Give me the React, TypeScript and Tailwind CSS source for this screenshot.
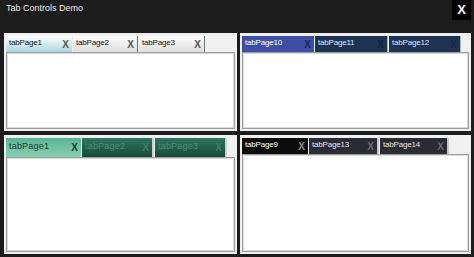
import React from "react";

type TabDef = {
  label: string;
  width: string;
  box: string;
  text: string;
  x: string;
};

type PanelProps = {
  tabs: TabDef[];
  stripHeight: string;
  font: string;
};

function TabPanel({ tabs, stripHeight, font }: PanelProps) {
  return (
    <div className="flex flex-col bg-[#f0f0f0] px-[2px] pb-[2px]">
      <div className={`flex items-end gap-[1px] pt-[3px] ${stripHeight}`}>
        {tabs.map((t) => (
          <div
            key={t.label}
            className={`flex h-full shrink-0 items-center justify-between pl-[3px] pr-[3px] ${t.width} ${t.box}`}
          >
            <span className={`-mt-[2px] ${font} ${t.text} leading-none`}>{t.label}</span>
            <span className={`mt-[1px] text-[10px] font-bold leading-none ${t.x}`}>X</span>
          </div>
        ))}
      </div>
      <div className="flex-1 border border-[#9c9c9c] bg-white shadow-[inset_0_0_0_1px_#dcdcdc]" />
    </div>
  );
}

const plainTab = "bg-gradient-to-b from-[#ffffff] to-[#dedede] border-r border-[#6e6e6e]";

const topLeft: TabDef[] = [
  { label: "tabPage1", width: "w-[66px]", box: "bg-gradient-to-b from-[#ffffff] to-[#a9d9e2]", text: "text-[#111]", x: "text-[#555]" },
  { label: "tabPage2", width: "w-[65px]", box: plainTab, text: "text-[#111]", x: "text-[#555]" },
  { label: "tabPage3", width: "w-[66px]", box: plainTab, text: "text-[#111]", x: "text-[#555]" },
];

const navyTab = "bg-[#1e3253] border-r border-[#aab0c0]";

const topRight: TabDef[] = [
  { label: "tabPage10", width: "w-[72px]", box: "bg-[#3d4fa3]", text: "text-white", x: "text-[#1d2650]" },
  { label: "tabPage11", width: "w-[73px]", box: navyTab, text: "text-[#dfe5f0]", x: "text-[#16243d]" },
  { label: "tabPage12", width: "w-[72px]", box: navyTab, text: "text-[#dfe5f0]", x: "text-[#16243d]" },
];

const tealTab = "bg-gradient-to-b from-[#2f7760] to-[#164a39] border-r-2 border-[#d0d0d0]";

const bottomLeft: TabDef[] = [
  { label: "tabPage1", width: "w-[75px]", box: "bg-gradient-to-b from-[#5cb393] to-[#86cfb5]", text: "text-[#163a2e]", x: "text-[#163a2e]" },
  { label: "tabPage2", width: "w-[72px]", box: tealTab, text: "text-[#4c8c74]", x: "text-[#3f7a64]" },
  { label: "tabPage3", width: "w-[72px]", box: tealTab, text: "text-[#4c8c74]", x: "text-[#3f7a64]" },
];

const greyTab = "bg-[#2b2b33] border-r-2 border-[#c8c8c8]";

const bottomRight: TabDef[] = [
  { label: "tabPage9", width: "w-[66px]", box: "bg-[#0b0b0b]", text: "text-white", x: "text-[#8a8a8a]" },
  { label: "tabPage13", width: "w-[70px]", box: greyTab, text: "text-[#e4e4e4]", x: "text-[#6a6a70]" },
  { label: "tabPage14", width: "w-[69px]", box: greyTab, text: "text-[#e4e4e4]", x: "text-[#6a6a70]" },
];

export default function App() {
  return (
    <div className="h-[257px] w-[474px] overflow-hidden bg-[#1c1c1c] font-['Liberation_Sans',sans-serif]">
      <div className="flex h-[33px] items-start justify-between">
        <span className="pl-[6px] pt-[2px] text-[9px] text-[#e8e8e8]">Tab Controls Demo</span>
        <div className="mr-[3px] flex h-[20px] w-[19px] items-center justify-center bg-black text-[13px] font-bold text-white">
          X
        </div>
      </div>
      <div className="ml-[4px] grid grid-cols-[233px_231px] grid-rows-[98px_119px] gap-x-[3px] gap-y-[4px]">
        <TabPanel tabs={topLeft} stripHeight="h-[19px]" font="text-[8px] tracking-[-0.2px]" />
        <TabPanel tabs={topRight} stripHeight="h-[19px]" font="text-[8px] tracking-[-0.2px]" />
        <TabPanel tabs={bottomLeft} stripHeight="h-[22px]" font="text-[9px] tracking-[0.2px]" />
        <TabPanel tabs={bottomRight} stripHeight="h-[19px]" font="text-[8px] tracking-[-0.2px]" />
      </div>
    </div>
  );
}
